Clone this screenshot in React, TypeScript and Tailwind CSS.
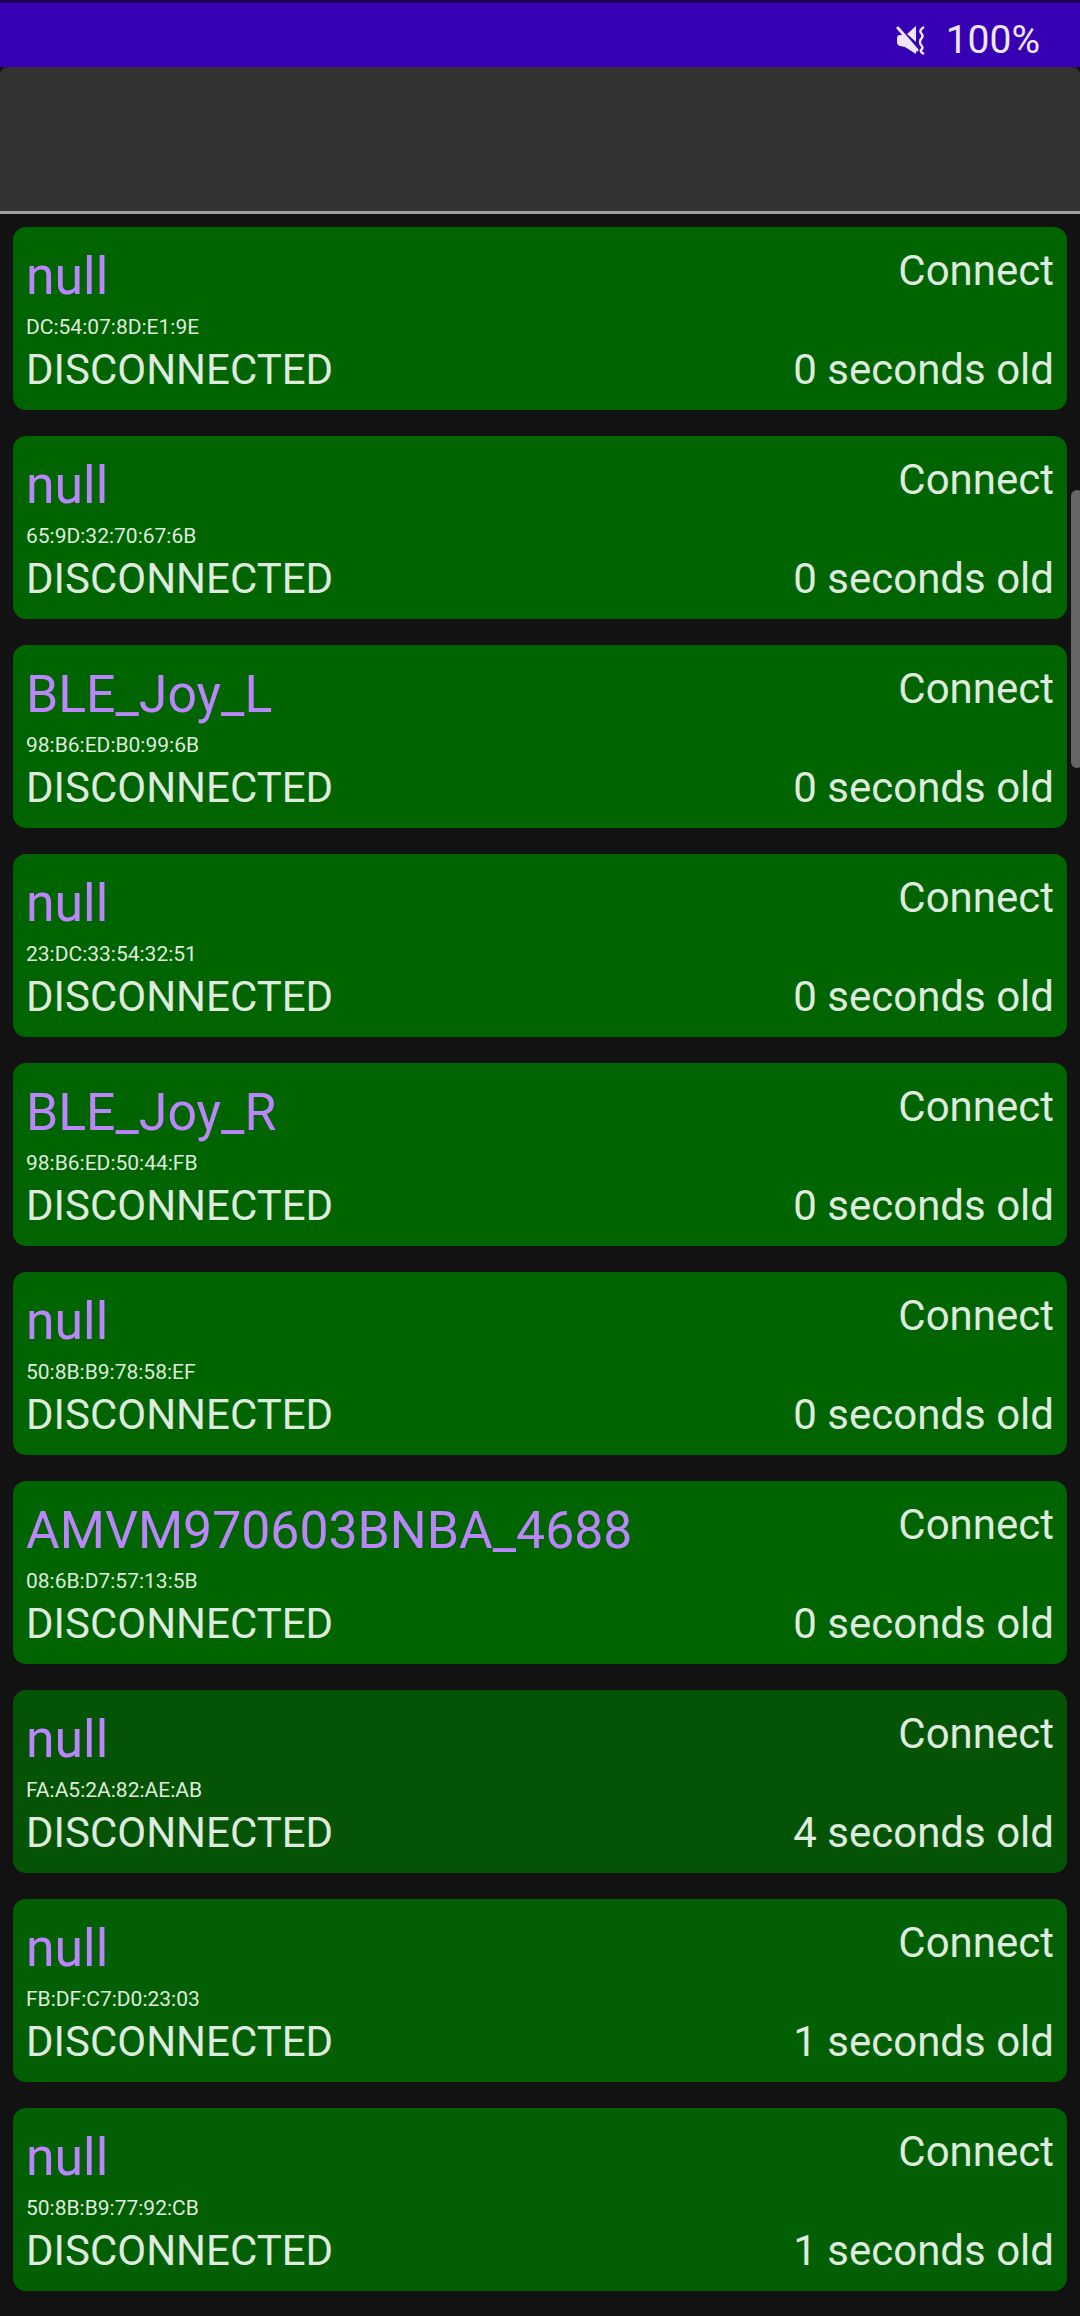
const devices = [
  { name: 'null', mac: 'DC:54:07:8D:E1:9E', age: 0, bg: 'bg-[#006400]' },
  { name: 'null', mac: '65:9D:32:70:67:6B', age: 0, bg: 'bg-[#006400]' },
  { name: 'BLE_Joy_L', mac: '98:B6:ED:B0:99:6B', age: 0, bg: 'bg-[#006400]' },
  { name: 'null', mac: '23:DC:33:54:32:51', age: 0, bg: 'bg-[#006400]' },
  { name: 'BLE_Joy_R', mac: '98:B6:ED:50:44:FB', age: 0, bg: 'bg-[#006400]' },
  { name: 'null', mac: '50:8B:B9:78:58:EF', age: 0, bg: 'bg-[#006400]' },
  { name: 'AMVM970603BNBA_4688', mac: '08:6B:D7:57:13:5B', age: 0, bg: 'bg-[#006400]' },
  { name: 'null', mac: 'FA:A5:2A:82:AE:AB', age: 4, bg: 'bg-[#055405]' },
  { name: 'null', mac: 'FB:DF:C7:D0:23:03', age: 1, bg: 'bg-[#035f03]' },
  { name: 'null', mac: '50:8B:B9:77:92:CB', age: 1, bg: 'bg-[#035f03]' },
];

const MuteVibrateIcon = () => (
  <svg viewBox="0 0 30 30" className="w-[30px] h-[30px] mr-[20px]" fill="none">
    <path d="M1 13 Q1 10 4 10 L8 10 L20 24 L20 29 L9 22 L4 21 Q1 20 1 17 Z" fill="currentColor" />
    <path d="M11 9 L20 1 L20 17 Z" fill="currentColor" />
    <path d="M2 3 L21 25" stroke="currentColor" strokeWidth="3" strokeLinecap="round" />
    <path d="M28 2 Q23 5 25 8 Q28 11 25 14 Q23 17 25 20 Q28 23 25 25 Q24 27 28 29" stroke="currentColor" strokeWidth="2.4" />
  </svg>
);

const DeviceCard = ({ name, mac, age, bg }: { name: string; mac: string; age: number; bg: string }) => (
  <div className={`h-[183px] rounded-[13px] px-[13px] pt-[18px] flex flex-col ${bg}`}>
    <div className="flex justify-between items-start">
      <span className="text-[51.75px] leading-[64px] text-[#bb86fc]">{name}</span>
      <span className="text-[42px] leading-[50px] mt-[1px] text-[#deebde]">Connect</span>
    </div>
    <div className="text-[21px] leading-[24px] mt-[6px] text-[#deebde]">{mac}</div>
    <div className="flex justify-between items-center mt-[6px] text-[42px] leading-[50px] text-[#deebde]">
      <span>DISCONNECTED</span>
      <span>{age} seconds old</span>
    </div>
  </div>
);

export default function App() {
  return (
    <div className="relative w-[1080px] h-[2316px] overflow-hidden bg-[#121212] font-['Roboto',sans-serif]">
      <div className="h-[67px] bg-[#3700b3] border-t-[3px] border-[#1c0059] pt-[10px] flex items-center justify-end pr-[40px] text-[#efe6fd]">
        <MuteVibrateIcon />
        <span className="text-[39px] leading-none">100%</span>
      </div>
      <div className="h-[147px] bg-[#333333] rounded-t-[8px] border-b-[3px] border-[#a0a0a0]" />
      <div className="flex flex-col gap-[26px] pt-[13px] pl-[13px] pr-[13px]">
        {devices.map((d) => (
          <DeviceCard key={d.mac} {...d} />
        ))}
      </div>
      <div className="absolute left-[1071px] top-[490px] w-[12px] h-[278px] rounded-[6px] bg-[#666666]" />
    </div>
  );
}
